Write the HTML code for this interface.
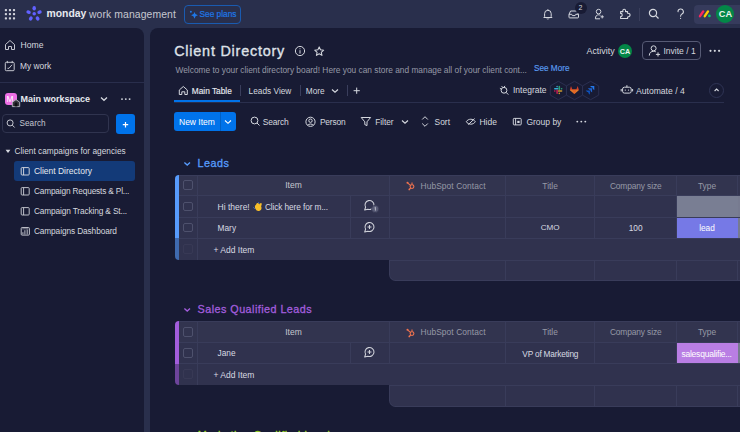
<!DOCTYPE html>
<html><head><meta charset="utf-8">
<style>
*{box-sizing:border-box;margin:0;padding:0}
html,body{width:740px;height:432px;overflow:hidden;background:#292f4c;font-family:"Liberation Sans",sans-serif;color:#d5d8df}
.a{position:absolute}
.t{position:absolute;white-space:nowrap;line-height:1}
svg{position:absolute;overflow:visible}
#side{left:0;top:28px;width:144px;height:404px;background:#181b34;border-top-right-radius:8px}
#main{left:150px;top:28px;width:590px;height:404px;background:#181b34;border-top-left-radius:8px}
.cell{position:absolute;background:#30324e}
.hl{position:absolute;background:#3c3f5c}
</style></head><body>
<!-- TOP BAR -->
<svg style="left:0;top:0" width="30" height="28"><g fill="#d0d2db"><rect x="4.80" y="9.00" width="2.2" height="2.2" rx="0.7"/><rect x="8.85" y="9.00" width="2.2" height="2.2" rx="0.7"/><rect x="12.90" y="9.00" width="2.2" height="2.2" rx="0.7"/><rect x="4.80" y="13.10" width="2.2" height="2.2" rx="0.7"/><rect x="8.85" y="13.10" width="2.2" height="2.2" rx="0.7"/><rect x="12.90" y="13.10" width="2.2" height="2.2" rx="0.7"/><rect x="4.80" y="17.20" width="2.2" height="2.2" rx="0.7"/><rect x="8.85" y="17.20" width="2.2" height="2.2" rx="0.7"/><rect x="12.90" y="17.20" width="2.2" height="2.2" rx="0.7"/></g></svg>
<svg style="left:0;top:0" width="45" height="28"><g fill="#6161ff"><circle cx="34.2" cy="13.8" r="1.75"/><ellipse cx="34.2" cy="8.2" rx="1.75" ry="2.25" transform="rotate(0.0 34.2 8.2)"/><ellipse cx="39.5" cy="12.1" rx="1.75" ry="2.25" transform="rotate(72.2 39.5 12.1)"/><ellipse cx="37.6" cy="18.5" rx="1.75" ry="2.25" transform="rotate(144.1 37.6 18.5)"/><ellipse cx="30.8" cy="18.5" rx="1.75" ry="2.25" transform="rotate(215.9 30.8 18.5)"/><ellipse cx="28.6" cy="12.1" rx="1.75" ry="2.25" transform="rotate(-73.1 28.6 12.1)"/></g></svg>
<div class="t" style="left:46.5px;top:9.2px;font-size:10.4px;font-weight:700;color:#e6e9ef">monday</div>
<div class="t" style="left:89px;top:9.5px;font-size:10.4px;letter-spacing:0.1px;color:#c5c7d0">work management</div>
<div class="a" style="left:184px;top:5px;width:57px;height:19px;border:1px solid #1a5bb0;border-radius:4px"></div>
<svg style="left:189px;top:9px" width="10" height="10"><path d="M5.5 2.9 Q6 5.8 8.9 6.3 Q6 6.8 5.5 9.7 Q5 6.8 2.1 6.3 Q5 5.8 5.5 2.9Z" fill="#1f77e6"/><circle cx="1.9" cy="2.7" r="1" fill="#1f77e6"/></svg>
<div class="t" style="left:199.5px;top:10px;font-size:8.3px;color:#1f77e6;-webkit-text-stroke:0.2px #1f77e6">See plans</div>

<!-- right icons -->
<svg style="left:542px;top:8px" width="12" height="12" fill="none" stroke="#d5d8df" stroke-width="1" stroke-linejoin="round"><path d="M2.6 8.6 L2.6 5.6 A3.3 3.3 0 0 1 9.2 5.6 L9.2 8.6 L10 9.5 L1.8 9.5 Z"/><path d="M5 10.6 A1 1 0 0 0 6.8 10.6 M5.9 1.2 L5.9 2.2"/></svg>
<svg style="left:567px;top:8px" width="14" height="12" fill="none" stroke="#d5d8df" stroke-width="1" stroke-linejoin="round"><path d="M2 6.3 L3.6 3 L9.9 3 L11.5 6.3 L11.5 9.2 Q11.5 9.9 10.8 9.9 L2.7 9.9 Q2 9.9 2 9.2 Z M2 6.3 L4.7 6.3 L5.4 7.6 L8.1 7.6 L8.8 6.3 L11.5 6.3"/></svg>
<div class="a" style="left:575px;top:2px;width:12px;height:12px;border-radius:6px;background:#181b34"></div>
<div class="t" style="left:578.5px;top:4.3px;font-size:7px;color:#d5d8df">2</div>
<svg style="left:592px;top:7px" width="14" height="14" fill="none" stroke="#d5d8df" stroke-width="1"><circle cx="6.6" cy="4.6" r="2.3"/><path d="M3.4 11.8 C3.4 9 4.8 7.8 6.6 7.8 C7.3 7.8 7.9 8 8.4 8.3"/><path d="M3.4 11.8 L8 11.8"/><path d="M10.2 8.2 L10.2 11.4 M8.6 9.8 L11.8 9.8"/></svg>
<svg style="left:618px;top:7px" width="14" height="14" fill="none" stroke="#d5d8df" stroke-width="1.05" stroke-linejoin="round"><path d="M2.6 11.5 L2.6 9.6 C4.8 9.6 4.8 6.4 2.6 6.4 L2.6 4.6 L4.9 4.6 C4.2 1.4 8.2 1.4 7.5 4.6 L9.6 4.6 L9.6 6.3 C12.9 6.3 12.9 9.9 9.6 9.9 L9.6 11.5 Z"/></svg>
<div class="a" style="left:639px;top:8px;width:1px;height:12.5px;background:#3a3f5c"></div>
<svg style="left:648px;top:8px" width="12" height="12" fill="none" stroke="#d5d8df" stroke-width="1.2"><circle cx="5" cy="5" r="3.6"/><path d="M7.7 7.7 L10.5 10.5"/></svg>
<svg style="left:676px;top:8px" width="10" height="12" fill="none" stroke="#d5d8df" stroke-width="1.05" stroke-linecap="round"><path d="M2 3.8 A2.7 2.7 0 1 1 5.8 6.1 C4.9 6.6 4.6 7.1 4.6 8.3"/><circle cx="4.6" cy="10.4" r="0.55" fill="#d5d8df" stroke="none"/></svg>
<div class="a" style="left:694px;top:5px;width:50px;height:18.5px;border-radius:4px;background:#363b5c"></div>
<svg style="left:698px;top:10px" width="14" height="9"><path d="M2 6.2 L5.2 1.4" stroke="#fb275d" stroke-width="2.4" stroke-linecap="round"/><path d="M6.8 6.2 L10 1.4" stroke="#ffcb00" stroke-width="2.4" stroke-linecap="round"/><circle cx="11.4" cy="5.9" r="1.35" fill="#00ca72"/></svg>
<div class="a" style="left:715.7px;top:4.5px;width:18.8px;height:18.8px;border-radius:50%;background:#038747"></div>
<div class="t" style="left:718.8px;top:9.5px;font-size:9.2px;font-weight:700;color:#e9f3ee">CA</div>

<!-- SIDEBAR -->
<div id="side" class="a"></div>
<svg style="left:4px;top:39px" width="12" height="12" fill="none" stroke="#c5c7d0" stroke-width="1"><path d="M1.5 5.5 L6 1.5 L10.5 5.5 L10.5 10.5 L7.5 10.5 L7.5 7.5 L4.5 7.5 L4.5 10.5 L1.5 10.5 Z"/></svg>
<div class="t" style="left:20.5px;top:40.5px;font-size:8.6px;color:#d5d8df">Home</div>
<svg style="left:4px;top:59.5px" width="12" height="12" fill="none" stroke="#c5c7d0" stroke-width="1"><rect x="1.3" y="2.3" width="8.9" height="8.4" rx="1"/><path d="M3.3 0.9 L3.3 3.2 M8.2 0.9 L8.2 3.2 M3.5 8.3 L5 8.3 L8 4.8"/></svg>
<div class="t" style="left:20px;top:61.8px;font-size:8.4px;color:#d5d8df">My work</div>
<div class="a" style="left:0;top:81.7px;width:144px;height:1px;background:#292e4c"></div>

<div class="a" style="left:4.5px;top:92.6px;width:12.1px;height:12.1px;border-radius:3px;background:#ee6fe6"></div>
<div class="t" style="left:6.6px;top:95.2px;font-size:8.3px;color:#fff">M</div>
<svg style="left:11px;top:98.8px" width="10" height="10"><path d="M5 0.6 L8.7 3.2 L8.7 7.6 L1.3 7.6 L1.3 3.2 Z" fill="#34353c" stroke="#b9bbc4" stroke-width="0.9" stroke-linejoin="round"/><path d="M3.6 7.6 L3.6 5 A1.4 1.4 0 0 1 6.4 5 L6.4 7.6Z" fill="#0f1014"/></svg>
<div class="t" style="left:20.5px;top:95.2px;font-size:9px;font-weight:700;color:#e6e9ef">Main workspace</div>
<svg style="left:99.6px;top:96px" width="8" height="6" fill="none" stroke="#d5d8df" stroke-width="1.25"><path d="M1 1.5 L4 4.3 L7 1.5"/></svg>
<svg style="left:119px;top:97px" width="14" height="4" fill="#d5d8df"><circle cx="3" cy="2.1" r="0.95"/><circle cx="6.8" cy="2.1" r="0.95"/><circle cx="10.6" cy="2.1" r="0.95"/></svg>
<div class="a" style="left:2px;top:114.3px;width:107px;height:19px;border:1px solid #30344f;border-radius:4px"></div>
<svg style="left:6px;top:119px" width="10" height="10" fill="none" stroke="#c5c7d0" stroke-width="1"><circle cx="4.1" cy="3.9" r="3"/><path d="M6.3 6.1 L8.6 8.5"/></svg>
<div class="t" style="left:19.6px;top:119.9px;font-size:8.2px;color:#c5c7d0">Search</div>
<div class="a" style="left:116px;top:114.3px;width:19px;height:19.3px;border-radius:3px;background:#0073ea"></div>
<svg style="left:120px;top:118.5px" width="11" height="11" stroke="#fff" stroke-width="1.2"><path d="M5.5 3 L5.5 8.4 M2.8 5.7 L8.2 5.7"/></svg>

<svg style="left:5px;top:149px" width="7" height="5"><path d="M0.6 0.8 L5.4 0.8 L3 3.9 Z" fill="#d5d8df"/></svg>
<div class="t" style="left:14.5px;top:147.3px;font-size:8.3px;color:#d5d8df">Client campaigns for agencies</div>
<div class="a" style="left:14px;top:161px;width:121px;height:19.8px;border-radius:3px;background:#133a78"></div>
<svg style="left:19.5px;top:166px" width="11" height="11" fill="none" stroke="#d5d8df" stroke-width="0.95"><rect x="1.2" y="1.6" width="8" height="7.4" rx="0.9"/><path d="M3.6 1.6 L3.6 9"/></svg>
<div class="t" style="left:33.9px;top:166.8px;font-size:8.5px;color:#e6e9ef">Client Directory</div>
<svg style="left:19.5px;top:186px" width="11" height="11" fill="none" stroke="#c5c7d0" stroke-width="0.95"><rect x="1.2" y="1.6" width="8" height="7.4" rx="0.9"/><path d="M3.6 1.6 L3.6 9"/></svg>
<div class="t" style="left:33.9px;top:187.4px;font-size:8.3px;letter-spacing:-0.17px;color:#d5d8df">Campaign Requests &amp; Pl...</div>
<svg style="left:19.5px;top:206px" width="11" height="11" fill="none" stroke="#c5c7d0" stroke-width="0.95"><rect x="1.2" y="1.6" width="8" height="7.4" rx="0.9"/><path d="M3.6 1.6 L3.6 9"/></svg>
<div class="t" style="left:33.9px;top:207.4px;font-size:8.3px;letter-spacing:-0.13px;color:#d5d8df">Campaign Tracking &amp; St...</div>
<svg style="left:19.5px;top:226px" width="11" height="11" fill="none" stroke="#c5c7d0" stroke-width="0.95"><rect x="1.2" y="1.5" width="8.2" height="7.6" rx="0.9"/><path d="M2.2 2.8 L8.4 2.8" stroke-width="0.6"/><path d="M2.9 8.4 L2.9 6.2 M4.9 8.4 L4.9 4.2 M7.2 8.4 L7.2 3.6" stroke-width="0.95"/></svg>
<div class="t" style="left:33.9px;top:227.4px;font-size:8.3px;letter-spacing:-0.1px;color:#d5d8df">Campaigns Dashboard</div>

<!-- MAIN -->
<div id="main" class="a"></div>
<div class="t" style="left:174.2px;top:43.9px;font-size:14.4px;letter-spacing:0.78px;-webkit-text-stroke:0.35px #dfe1e8;color:#dfe1e8">Client Directory</div>
<svg style="left:294px;top:45px" width="12" height="12" fill="none" stroke="#d5d8df" stroke-width="1"><circle cx="6" cy="6" r="4.6"/><path d="M6 5.2 L6 8.6 M6 3.3 L6 4.2"/></svg>
<svg style="left:312.5px;top:44.5px" width="13" height="13" fill="none" stroke="#d5d8df" stroke-width="1.05" stroke-linejoin="round"><path d="M6.20 1.90 L7.49 4.82 L10.67 5.15 L8.29 7.28 L8.96 10.40 L6.20 8.80 L3.44 10.40 L4.11 7.28 L1.73 5.15 L4.91 4.82Z"/></svg>

<div class="t" style="left:586.5px;top:46.5px;font-size:8.9px;color:#d5d8df">Activity</div>
<div class="a" style="left:617.8px;top:43.7px;width:14.6px;height:14.6px;border-radius:50%;background:#038747"></div>
<div class="t" style="left:619.8px;top:47.6px;font-size:7.2px;font-weight:700;color:#e9f3ee">CA</div>
<div class="a" style="left:642.2px;top:41.4px;width:58.6px;height:19px;border:1px solid #565a74;border-radius:4px"></div>
<svg style="left:647.5px;top:44px" width="14" height="14" fill="none" stroke="#d5d8df" stroke-width="1"><circle cx="5.6" cy="4.3" r="2.5"/><path d="M1.3 11.6 C1.3 8.6 3.2 7.3 5.6 7.3 C6.5 7.3 7.2 7.5 7.8 7.8"/><path d="M10 8.3 L10 12.5 M7.9 10.4 L12.1 10.4"/></svg>
<div class="t" style="left:663.5px;top:47px;font-size:8.5px;color:#d5d8df">Invite / 1</div>
<svg style="left:708px;top:49px" width="14" height="4" fill="#d5d8df"><circle cx="2.5" cy="1.8" r="1.1"/><circle cx="6.8" cy="1.8" r="1.1"/><circle cx="11.1" cy="1.8" r="1.1"/></svg>

<div class="t" style="left:175.5px;top:66px;font-size:8.36px;color:#9699a6">Welcome to your client directory board! Here you can store and manage all of your client cont...</div>
<div class="t" style="left:534px;top:65.2px;font-size:8.2px;color:#5b9df2;-webkit-text-stroke:0.15px #5b9df2">See More</div>

<!-- tabs -->
<svg style="left:178px;top:85px" width="11" height="11" fill="none" stroke="#d5d8df" stroke-width="1"><path d="M1.3 5 L5.3 1.5 L9.3 5 L9.3 9.5 L6.8 9.5 L6.8 6.8 L3.8 6.8 L3.8 9.5 L1.3 9.5 Z"/></svg>
<div class="t" style="left:191.8px;top:86.5px;font-size:8.3px;color:#e6e9ef;-webkit-text-stroke:0.15px #e6e9ef">Main Table</div>
<div class="a" style="left:173.8px;top:100px;width:66.7px;height:2px;background:#0073ea"></div>
<div class="a" style="left:240.3px;top:85px;width:1px;height:11px;background:#3a3e5c"></div>
<div class="t" style="left:248.6px;top:86.5px;font-size:8.3px;color:#d5d8df">Leads View</div>
<div class="a" style="left:300px;top:85px;width:1px;height:11px;background:#3a3e5c"></div>
<div class="t" style="left:305.8px;top:86.9px;font-size:8.3px;color:#d5d8df">More</div>
<svg style="left:331px;top:88px" width="8" height="6" fill="none" stroke="#d5d8df" stroke-width="1.2"><path d="M1 1.5 L4 4.3 L7 1.5"/></svg>
<div class="a" style="left:347.3px;top:85px;width:1px;height:11px;background:#3a3e5c"></div>
<svg style="left:352px;top:86px" width="10" height="10" stroke="#d5d8df" stroke-width="1"><path d="M4.7 1.6 L4.7 7.8 M1.6 4.7 L7.8 4.7"/></svg>

<svg style="left:497.5px;top:83.5px" width="13" height="13" fill="none" stroke="#d5d8df" stroke-width="1"><circle cx="6" cy="6.3" r="2.9"/><path d="M4.9 3.6 L3.6 2.1 M7 1.9 L5.3 3.8 M3.4 5.3 L1.9 4.3 M8.1 8.4 L10.3 10.6"/></svg>
<div class="t" style="left:513px;top:85.9px;font-size:8.5px;color:#d5d8df">Integrate</div>
<svg style="left:547px;top:80px" width="56" height="22" fill="none">
 <path d="M11.4 1.3 L19.5 5.9 L19.5 15.1 L11.4 19.7 L3.3 15.1 L3.3 5.9Z M27.5 1.3 L35.6 5.9 L35.6 15.1 L27.5 19.7 L19.4 15.1 L19.4 5.9Z M43.6 1.3 L51.7 5.9 L51.7 15.1 L43.6 19.7 L35.5 15.1 L35.5 5.9Z" stroke="#2c3152" stroke-width="0.9"/>
 <g stroke-width="1.55" stroke-linecap="round" opacity=".85"><path d="M7.80 8.80 L10.80 8.80 M10.10 6.40 L10.10 6.60" stroke="#36c5f0"/><path d="M12.30 6.50 L12.30 9.50 M14.70 8.80 L14.50 8.80" stroke="#2eb67d"/><path d="M11.60 11.00 L14.60 11.00 M12.30 13.40 L12.30 13.20" stroke="#ecb22e"/><path d="M10.10 10.30 L10.10 13.30 M7.70 11.00 L7.90 11.00" stroke="#e01e5a"/></g>
 <g opacity=".9"><path d="M22.8 9.9 L24 5.9 L25.4 9.6 L29.3 9.6 L30.7 5.9 L31.9 9.9 L27.35 14 Z" fill="#e24329"/><path d="M25.4 9.6 L27.35 14 L29.3 9.6 Z" fill="#fc6d26"/><path d="M22.8 9.9 L25.4 9.6 L27.35 14Z M31.9 9.9 L29.3 9.6 L27.35 14Z" fill="#fca326" opacity=".7"/></g>
 <g opacity=".9"><path d="M43.00 6.00 L47.30 6.00 L47.30 10.30 L45.70 8.70 L45.70 7.60 L44.60 7.60 Z" fill="#2684ff"/><path d="M40.80 8.20 L45.10 8.20 L45.10 12.50 L43.50 10.90 L43.50 9.80 L42.40 9.80 Z" fill="#1d6fe8"/><path d="M38.60 10.40 L42.90 10.40 L42.90 14.70 L41.30 13.10 L41.30 12.00 L40.20 12.00 Z" fill="#0c5ad0"/></g>
</svg>
<svg style="left:619.5px;top:84px" width="14" height="13" fill="none" stroke="#d5d8df" stroke-width="1"><rect x="2.6" y="3.2" width="8.6" height="5.9" rx="1.8"/><path d="M6.9 1.2 L6.9 3.2 M1.2 5 L1.2 7.4 M12.6 5 L12.6 7.4"/><circle cx="5.3" cy="6.1" r="0.65" fill="#d5d8df" stroke="none"/><circle cx="8.5" cy="6.1" r="0.65" fill="#d5d8df" stroke="none"/></svg>
<div class="t" style="left:636px;top:86.5px;font-size:8.6px;color:#d5d8df">Automate / 4</div>
<div class="a" style="left:709px;top:82.9px;width:15.2px;height:15.2px;border:1px solid #2f3455;border-radius:50%"></div>
<svg style="left:713px;top:87.3px" width="8" height="6" fill="none" stroke="#d5d8df" stroke-width="1.1"><path d="M1.6 4 L3.6 2 L5.6 4"/></svg>
<div class="a" style="left:174px;top:101.8px;width:550px;height:1px;background:#2a2f4d"></div>

<!-- toolbar -->
<div class="a" style="left:173.9px;top:112.3px;width:62.2px;height:19px;border-radius:3px;background:#0073ea"></div>
<div class="a" style="left:219.6px;top:112.3px;width:0.8px;height:19px;background:#0060c4"></div>
<div class="t" style="left:179px;top:117.7px;font-size:8.5px;color:#fff">New Item</div>
<svg style="left:224px;top:119px" width="8" height="6" fill="none" stroke="#fff" stroke-width="1.1"><path d="M1 1.5 L4 4.3 L7 1.5"/></svg>
<svg style="left:250px;top:116px" width="11" height="11" fill="none" stroke="#d5d8df" stroke-width="1"><circle cx="4.5" cy="4.5" r="3.4"/><path d="M7 7 L9.5 9.5"/></svg>
<div class="t" style="left:262.8px;top:118px;font-size:8.5px;letter-spacing:-0.2px;color:#d5d8df">Search</div>
<svg style="left:304.5px;top:115.5px" width="12" height="12" fill="none" stroke="#d5d8df" stroke-width="1"><circle cx="5.5" cy="5.8" r="4.6"/><circle cx="5.5" cy="4.7" r="1.7"/><path d="M2.6 9.3 C3.5 7.6 7.5 7.6 8.4 9.3"/></svg>
<div class="t" style="left:319.9px;top:118px;font-size:8.4px;letter-spacing:-0.15px;color:#d5d8df">Person</div>
<svg style="left:359.5px;top:116px" width="12" height="11" fill="none" stroke="#d5d8df" stroke-width="1"><path d="M1.2 1.5 L10.6 1.5 L7 5.8 L7 9.6 L4.8 8.6 L4.8 5.8 Z" stroke-linejoin="round"/></svg>
<div class="t" style="left:375.2px;top:118px;font-size:8.3px;color:#d5d8df">Filter</div>
<svg style="left:401px;top:119px" width="8" height="6" fill="none" stroke="#d5d8df" stroke-width="1.2"><path d="M1 1.5 L4 4.3 L7 1.5"/></svg>
<svg style="left:421px;top:115px" width="8" height="13" fill="none" stroke="#d5d8df" stroke-width="1"><path d="M1.2 4.5 L4 1.7 L6.8 4.5 M1.2 8.5 L4 11.3 L6.8 8.5"/></svg>
<div class="t" style="left:434.6px;top:118px;font-size:8.4px;color:#d5d8df">Sort</div>
<svg style="left:464.5px;top:116px" width="12" height="11" fill="none" stroke="#d5d8df" stroke-width="1"><path d="M1.3 5.7 C3.2 2.4 8.4 2.4 10.3 5.7 C8.4 9 3.2 9 1.3 5.7 Z"/><path d="M3.3 8.6 L9.6 2.6"/></svg>
<div class="t" style="left:479.4px;top:118px;font-size:8.5px;color:#d5d8df">Hide</div>
<svg style="left:512px;top:116px" width="11" height="11" fill="none" stroke="#d5d8df" stroke-width="0.95"><rect x="1.3" y="2.4" width="7.9" height="6.5" rx="0.8"/><path d="M3.6 2.4 L3.6 8.9"/><rect x="5.3" y="4.8" width="2.3" height="2.2" fill="#d5d8df" stroke="none"/></svg>
<div class="t" style="left:526.4px;top:118px;font-size:8.5px;color:#d5d8df">Group by</div>
<svg style="left:575px;top:120px" width="14" height="4" fill="#d5d8df"><circle cx="2.3" cy="1.6" r="0.95"/><circle cx="6.3" cy="1.6" r="0.95"/><circle cx="10.3" cy="1.6" r="0.95"/></svg>

<div id="groups"><!-- GROUPS -->
<svg style="left:182.6px;top:160.6px" width="9" height="6" fill="none" stroke="#579bfc" stroke-width="1.35"><path d="M1.4 1.4 L4.2 4.1 L7 1.4"/></svg>
<div class="t" style="left:197.6px;top:157.5px;font-size:10.8px;color:#579bfc;letter-spacing:0.45px;-webkit-text-stroke:0.3px #579bfc">Leads</div>
<div class="a" style="left:179px;top:174.7px;width:561px;height:85.4px;background:#30324e"></div>
<div class="a" style="left:179px;top:174.7px;width:561px;height:21.2px;background:#32344f"></div>
<div class="a" style="left:175px;top:174.7px;width:8px;height:63.6px;background:#579bfc;border-radius:4px 0 0 0"></div>
<div class="a" style="left:175px;top:238.3px;width:8px;height:21.8px;background:#579bfc;opacity:.62;border-radius:0 0 0 4px"></div>
<div class="a" style="left:179px;top:174.7px;width:561px;height:85.4px;background:#30324e;border-radius:0"></div>
<div class="a" style="left:179px;top:174.7px;width:561px;height:21.2px;background:#32344f"></div>
<div class="a" style="left:389.1px;top:259.6px;width:351px;height:21.7px;background:#30324e;border:1px solid #393c5a;border-right:none;border-radius:0 0 0 6.5px"></div>
<div class="a" style="left:179px;top:174.7px;width:561px;height:1px;background:#393c5a"></div>
<div class="a" style="left:179px;top:195.4px;width:561px;height:1px;background:#393c5a"></div>
<div class="a" style="left:179px;top:216.6px;width:561px;height:1px;background:#393c5a"></div>
<div class="a" style="left:179px;top:237.8px;width:561px;height:1px;background:#393c5a"></div>
<div class="a" style="left:197px;top:174.7px;width:1px;height:85.4px;background:#393c5a"></div>
<div class="a" style="left:350.4px;top:195.9px;width:1px;height:42.4px;background:#393c5a"></div>
<div class="a" style="left:389.1px;top:174.7px;width:1px;height:63.6px;background:#393c5a"></div>
<div class="a" style="left:504.9px;top:174.7px;width:1px;height:63.6px;background:#393c5a"></div>
<div class="a" style="left:504.9px;top:260.1px;width:1px;height:20.7px;background:#393c5a"></div>
<div class="a" style="left:594.3px;top:174.7px;width:1px;height:63.6px;background:#393c5a"></div>
<div class="a" style="left:594.3px;top:260.1px;width:1px;height:20.7px;background:#393c5a"></div>
<div class="a" style="left:676px;top:174.7px;width:1px;height:63.6px;background:#393c5a"></div>
<div class="a" style="left:676px;top:260.1px;width:1px;height:20.7px;background:#393c5a"></div>
<div class="a" style="left:737.1px;top:174.7px;width:1px;height:63.6px;background:#393c5a"></div>
<div class="a" style="left:737.1px;top:260.1px;width:1px;height:20.7px;background:#393c5a"></div>
<div class="a" style="left:183.2px;top:180.4px;width:9.8px;height:9.5px;border:1px solid #4e516d;border-radius:2px"></div>
<div class="a" style="left:183.2px;top:201.6px;width:9.8px;height:9.5px;border:1px solid #4e516d;border-radius:2px"></div>
<div class="a" style="left:183.2px;top:222.8px;width:9.8px;height:9.5px;border:1px solid #4e516d;border-radius:2px"></div>
<div class="a" style="left:183.2px;top:244px;width:9.8px;height:9.5px;border:1px solid #4e516d;border-radius:2px;opacity:.25"></div>
<div class="t" style="left:233.5px;width:120px;text-align:center;top:181.4px;font-size:8.5px;color:#c5c7d0;">Item</div>
<svg style="left:406px;top:179.9px" width="10" height="11"><g stroke="#f2734f" stroke-width="1.1" fill="none"><circle cx="6" cy="6.6" r="1.9"/><path d="M6 4.7 L6 2.4 M4.5 5.4 L1.8 3.1 M4.7 8 L3.4 9.3"/></g><circle cx="1.5" cy="2.8" r="1.05" fill="#f2734f"/><circle cx="3.3" cy="9.4" r="0.85" fill="#f2734f"/></svg>
<div class="t" style="left:420.6px;top:181.8px;font-size:8.4px;color:#9699a6;letter-spacing:0.08px">HubSpot Contact</div>
<div class="t" style="left:490.1px;width:120px;text-align:center;top:181.8px;font-size:8.4px;color:#9699a6;">Title</div>
<div class="t" style="left:575.7px;width:120px;text-align:center;top:181.8px;font-size:8.4px;color:#9699a6;letter-spacing:-0.12px">Company size</div>
<div class="t" style="left:647px;width:120px;text-align:center;top:181.8px;font-size:8.4px;color:#9699a6;">Type</div>
<div class="t" style="left:217.6px;top:202.8px;font-size:8.5px;color:#d8dae2;">Hi there!</div>
<svg style="left:252px;top:201.2px" width="12" height="12"><g fill="#f5bd2a"><ellipse cx="6.2" cy="6.4" rx="3.1" ry="3.6" transform="rotate(-25 6.2 6.4)"/><ellipse cx="8.6" cy="3.8" rx="1" ry="1.8" transform="rotate(20 8.6 3.8)"/><ellipse cx="5.6" cy="3.2" rx="1.2" ry="1.3"/></g><g stroke="#3f73c9" stroke-width="1" stroke-linecap="round"><path d="M6.6 1.6 L7.3 2.2"/><path d="M1.7 6.6 L2.4 7.5"/></g></svg>
<div class="t" style="left:264.9px;top:202.8px;font-size:8.3px;color:#d8dae2;letter-spacing:-0.1px">Click here for m...</div>
<svg style="left:362.7px;top:199.2px" width="14" height="14" fill="none" stroke="#cfd1d9" stroke-width="1.05"><path d="M2.6 8.25 L1.7 10.9 L4.96 10.23 A4.5 4.5 0 1 0 2.6 8.25 Z" stroke-linejoin="round"/><circle cx="12.2" cy="9.9" r="3.7" fill="#585b76" stroke="#30324e" stroke-width="0.7"/><path d="M11.7 8.7 L12.4 8.3 L12.4 11.6" stroke="#d5d8df" stroke-width="0.75"/></svg>
<div class="a" style="left:676.5px;top:196.4px;width:61px;height:20.2px;background:#797e93"></div>
<div class="a" style="left:738.4px;top:196.4px;width:10px;height:20.2px;background:#777b90"></div>
<div class="t" style="left:217.6px;top:224px;font-size:8.3px;color:#d8dae2;">Mary</div>
<svg style="left:363px;top:221px" width="13" height="13" fill="none" stroke="#cfd1d9" stroke-width="1.05"><path d="M2.6 8.25 L1.7 10.9 L4.96 10.23 A4.5 4.5 0 1 0 2.6 8.25 Z" stroke-linejoin="round"/><path d="M6.5 4 L6.5 8 M4.5 6 L8.5 6"/></svg>
<div class="t" style="left:490.2px;width:120px;text-align:center;top:224px;font-size:8.1px;color:#d8dae2;">CMO</div>
<div class="t" style="left:575.6px;width:120px;text-align:center;top:224px;font-size:8.3px;color:#d8dae2;">100</div>
<div class="a" style="left:676.5px;top:217.6px;width:61px;height:20.2px;background:#7679e6"></div>
<div class="t" style="left:647px;width:120px;text-align:center;top:224px;font-size:8.3px;color:#ffffff;">lead</div>
<div class="a" style="left:738.4px;top:217.6px;width:10px;height:20.2px;background:#777b90"></div>
<div class="t" style="left:213.5px;top:245.5px;font-size:8.5px;color:#d8dae2;">+ Add Item</div>
<svg style="left:182.6px;top:307.2px" width="9" height="6" fill="none" stroke="#a25ddc" stroke-width="1.35"><path d="M1.4 1.4 L4.2 4.1 L7 1.4"/></svg>
<div class="t" style="left:197.6px;top:304.1px;font-size:10.8px;color:#a25ddc;letter-spacing:0.45px;-webkit-text-stroke:0.3px #a25ddc">Sales Qualified Leads</div>
<div class="a" style="left:179px;top:321.3px;width:561px;height:64.2px;background:#30324e"></div>
<div class="a" style="left:179px;top:321.3px;width:561px;height:21.2px;background:#32344f"></div>
<div class="a" style="left:175px;top:321.3px;width:8px;height:42.4px;background:#a25ddc;border-radius:4px 0 0 0"></div>
<div class="a" style="left:175px;top:363.7px;width:8px;height:21.8px;background:#a25ddc;opacity:.62;border-radius:0 0 0 4px"></div>
<div class="a" style="left:179px;top:321.3px;width:561px;height:64.2px;background:#30324e;border-radius:0"></div>
<div class="a" style="left:179px;top:321.3px;width:561px;height:21.2px;background:#32344f"></div>
<div class="a" style="left:389.1px;top:385px;width:351px;height:21.7px;background:#30324e;border:1px solid #393c5a;border-right:none;border-radius:0 0 0 6.5px"></div>
<div class="a" style="left:179px;top:321.3px;width:561px;height:1px;background:#393c5a"></div>
<div class="a" style="left:179px;top:342px;width:561px;height:1px;background:#393c5a"></div>
<div class="a" style="left:179px;top:363.2px;width:561px;height:1px;background:#393c5a"></div>
<div class="a" style="left:197px;top:321.3px;width:1px;height:64.2px;background:#393c5a"></div>
<div class="a" style="left:350.4px;top:342.5px;width:1px;height:21.2px;background:#393c5a"></div>
<div class="a" style="left:389.1px;top:321.3px;width:1px;height:42.4px;background:#393c5a"></div>
<div class="a" style="left:504.9px;top:321.3px;width:1px;height:42.4px;background:#393c5a"></div>
<div class="a" style="left:504.9px;top:385.5px;width:1px;height:20.7px;background:#393c5a"></div>
<div class="a" style="left:594.3px;top:321.3px;width:1px;height:42.4px;background:#393c5a"></div>
<div class="a" style="left:594.3px;top:385.5px;width:1px;height:20.7px;background:#393c5a"></div>
<div class="a" style="left:676px;top:321.3px;width:1px;height:42.4px;background:#393c5a"></div>
<div class="a" style="left:676px;top:385.5px;width:1px;height:20.7px;background:#393c5a"></div>
<div class="a" style="left:737.1px;top:321.3px;width:1px;height:42.4px;background:#393c5a"></div>
<div class="a" style="left:737.1px;top:385.5px;width:1px;height:20.7px;background:#393c5a"></div>
<div class="a" style="left:183.2px;top:327px;width:9.8px;height:9.5px;border:1px solid #4e516d;border-radius:2px"></div>
<div class="a" style="left:183.2px;top:348.2px;width:9.8px;height:9.5px;border:1px solid #4e516d;border-radius:2px"></div>
<div class="a" style="left:183.2px;top:369.4px;width:9.8px;height:9.5px;border:1px solid #4e516d;border-radius:2px;opacity:.25"></div>
<div class="t" style="left:233.5px;width:120px;text-align:center;top:328px;font-size:8.5px;color:#c5c7d0;">Item</div>
<svg style="left:406px;top:326.5px" width="10" height="11"><g stroke="#f2734f" stroke-width="1.1" fill="none"><circle cx="6" cy="6.6" r="1.9"/><path d="M6 4.7 L6 2.4 M4.5 5.4 L1.8 3.1 M4.7 8 L3.4 9.3"/></g><circle cx="1.5" cy="2.8" r="1.05" fill="#f2734f"/><circle cx="3.3" cy="9.4" r="0.85" fill="#f2734f"/></svg>
<div class="t" style="left:420.6px;top:328.4px;font-size:8.4px;color:#9699a6;letter-spacing:0.08px">HubSpot Contact</div>
<div class="t" style="left:490.1px;width:120px;text-align:center;top:328.4px;font-size:8.4px;color:#9699a6;">Title</div>
<div class="t" style="left:575.7px;width:120px;text-align:center;top:328.4px;font-size:8.4px;color:#9699a6;letter-spacing:-0.12px">Company size</div>
<div class="t" style="left:647px;width:120px;text-align:center;top:328.4px;font-size:8.4px;color:#9699a6;">Type</div>
<div class="t" style="left:217.6px;top:349.2px;font-size:8.3px;color:#d8dae2;">Jane</div>
<svg style="left:363px;top:346.4px" width="13" height="13" fill="none" stroke="#cfd1d9" stroke-width="1.05"><path d="M2.6 8.25 L1.7 10.9 L4.96 10.23 A4.5 4.5 0 1 0 2.6 8.25 Z" stroke-linejoin="round"/><path d="M6.5 4 L6.5 8 M4.5 6 L8.5 6"/></svg>
<div class="t" style="left:490.3px;width:120px;text-align:center;top:350.1px;font-size:8.3px;color:#d8dae2;letter-spacing:-0.2px">VP of Marketing</div>
<div class="a" style="left:676.5px;top:343px;width:61px;height:20.2px;background:#b97ee4"></div>
<div class="t" style="left:681.4px;top:349.7px;font-size:8.5px;color:#ffffff;letter-spacing:-0.22px">salesqualifie...</div>
<div class="a" style="left:738.4px;top:343px;width:10px;height:20.2px;background:#777b90"></div>
<div class="t" style="left:213.5px;top:370.9px;font-size:8.5px;color:#d8dae2;">+ Add Item</div>
<div class="t" style="left:197.8px;top:430.3px;font-size:10.8px;color:#9cd326;letter-spacing:0.52px;-webkit-text-stroke:0.3px #9cd326">Marketing Qualified Leads</div>
</div><!--endgroups-->
</body></html>
